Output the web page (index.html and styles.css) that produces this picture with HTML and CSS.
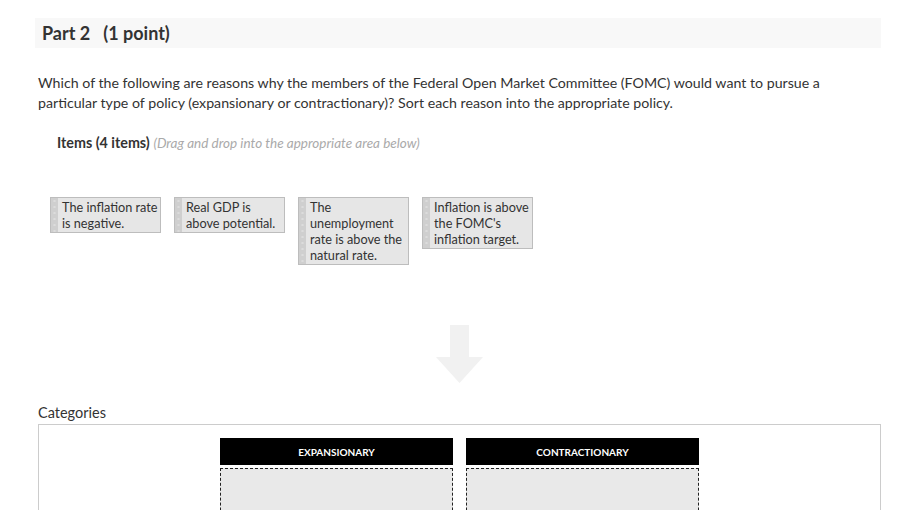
FILE: index.html
```html
<!DOCTYPE html>
<html>
<head>
<meta charset="utf-8">
<link rel="stylesheet" href="styles.css">
</head>
<body>
<div class="page">
  <div class="part-head"><span class="part-name">Part 2</span><span class="part-pts">(1 point)</span></div>
  <p class="question">Which of the following are reasons why the members of the Federal Open Market Committee (FOMC) would want to pursue a particular type of policy (expansionary or contractionary)? Sort each reason into the appropriate policy.</p>
  <div class="items-label"><b>Items (4 items)</b> <i>(Drag and drop into the appropriate area below)</i></div>
  <div class="items">
    <div class="item"><span class="handle"></span><span class="item-text">The inflation rate is negative.</span></div>
    <div class="item"><span class="handle"></span><span class="item-text">Real GDP is above potential.</span></div>
    <div class="item"><span class="handle"></span><span class="item-text">The unemployment rate is above the natural rate.</span></div>
    <div class="item"><span class="handle"></span><span class="item-text">Inflation is above the FOMC's inflation target.</span></div>
  </div>
  <div class="arrow-wrap">
    <svg width="48" height="58" viewBox="0 0 48 58"><path d="M14 0H33V32H47L23.5 58L0 32H14Z" fill="#f1f1f1"/></svg>
  </div>
  <div class="cat-label">Categories</div>
  <div class="cat-box">
    <div class="cat">
      <div class="cat-head">EXPANSIONARY</div>
      <div class="cat-drop"></div>
    </div>
    <div class="cat">
      <div class="cat-head">CONTRACTIONARY</div>
      <div class="cat-drop"></div>
    </div>
  </div>
</div>
</body>
</html>
```
FILE: styles.css
```css
html, body { margin: 0; padding: 0; background: #fff; }
body { font-family: Lato, "Open Sans", sans-serif; color: #333; }
.page { padding: 18px 21px 0 35px; width: 846px; overflow: hidden; height: 492px; }
.part-head { height: 30px; background: #f8f8f8; display: flex; align-items: center; padding-left: 7px; font-weight: bold; font-size: 18px; color: #333; }
.part-pts { margin-left: 13px; }
.question { margin: 25px 0 0 3px; font-size: 14.2px; line-height: 20px; color: #333; }
.items-label { margin: 20px 0 0 22px; font-size: 14.3px; line-height: 20px; }
.items-label b { color: #333; }
.items-label i { color: #aaa; font-size: 13.5px; }
.items { display: flex; align-items: flex-start; gap: 13px; margin: 44px 0 0 15px; }
.item { width: 109px; display: flex; background: #e6e6e6; border: 1px solid #bdbdbd; font-size: 12.7px; line-height: 16px; color: #333; padding: 1px 0; }
.handle { width: 7px; margin: -1px 0; flex: none; background-color: #cfcfcf; background-image: radial-gradient(circle, #dcdcdc 1px, transparent 1.3px); background-size: 7px 6px; }
.item-text { padding: 0 0 0 4px; }
.arrow-wrap { display: flex; justify-content: center; margin-top: 60px; padding-left: 4px; }
.cat-label { margin: 20px 0 0 3px; font-size: 14.5px; line-height: 20px; color: #333; }
.cat-box { margin: 1px 0 0 3px; border: 1px solid #ccc; height: 120px; display: flex; justify-content: center; gap: 13px; padding-top: 13px; }
.cat { width: 233px; }
.cat-head { background: #000; color: #fff; height: 27px; display: flex; align-items: center; justify-content: center; font-size: 10px; font-weight: bold; }
.cat-drop { margin-top: 3px; height: 80px; background: #e9e9e9; border: 1px dashed #222; }
```
